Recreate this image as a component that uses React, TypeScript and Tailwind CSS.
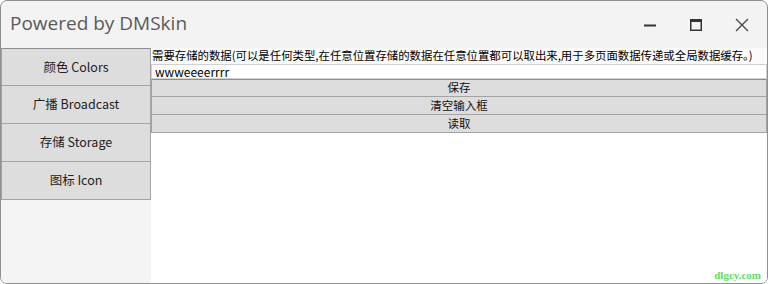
import React, { useState } from 'react';

const menu = ['颜色 Colors', '广播 Broadcast', '存储 Storage', '图标 Icon'];

const cjk = '"Noto Sans CJK SC", "Noto Sans", sans-serif';

const WinButton: React.FC<{ children: React.ReactNode }> = ({ children }) => (
  <div className="w-[46px] h-[46px] flex items-center justify-center text-[#333]">{children}</div>
);

export default function App() {
  const [value, setValue] = useState('wwweeeerrrr');

  return (
    <div className="relative w-[768px] h-[284px] overflow-hidden rounded-[7px] border border-[#8f8f8f] bg-[#f3f3f3] flex flex-col" style={{ fontFamily: cjk }}>
      <div className="h-[47px] shrink-0 flex items-center justify-between">
        <div className="pl-[9px] pb-[2px] text-[19px] text-[#5a5a5a]" style={{ fontFamily: '"Open Sans", "Noto Sans", sans-serif' }}>
          Powered by DMSkin
        </div>
        <div className="flex items-center pr-[2px]">
          <WinButton>
            <svg width="12" height="12" viewBox="0 0 12 12"><rect x="0" y="5.5" width="12" height="2" fill="#333" /></svg>
          </WinButton>
          <WinButton>
            <svg width="12" height="12" viewBox="0 0 12 12"><rect x="0.75" y="0.75" width="10.5" height="10.5" fill="none" stroke="#333" strokeWidth="1.5" /><rect x="0" y="0" width="12" height="3" fill="#333" /></svg>
          </WinButton>
          <WinButton>
            <svg width="14" height="14" viewBox="0 0 14 14"><path d="M1 1 L13 13 M13 1 L1 13" stroke="#444" strokeWidth="1.3" /></svg>
          </WinButton>
        </div>
      </div>
      <div className="flex flex-1 min-h-0">
        <div className="w-[150px] shrink-0 flex flex-col bg-[#f4f4f5]">
          {menu.map((m, i) => (
            <button key={i} className={`h-[38px] bg-[#dddddd] border border-[#a3a3a3] ${i > 0 ? 'border-t-0' : ''} border-t-[#8e8e8e] text-[12.5px] text-[#222]`}>
              {m}
            </button>
          ))}
        </div>
        <div className="flex-1 flex flex-col bg-white">
          <div className="h-[16px] flex items-center pl-[1px] text-[11.4px] text-black bg-[#fafafa] whitespace-nowrap">
            需要存储的数据(可以是任何类型,在任意位置存储的数据在任意位置都可以取出来,用于多页面数据传递或全局数据缓存。)
          </div>
          <input
            value={value}
            onChange={e => setValue(e.target.value)}
            className="h-[15px] border border-[#d0d0d0] px-[3px] text-[12px] text-black outline-none bg-white"
            style={{ fontFamily: cjk }}
          />
          {['保存', '清空输入框', '读取'].map((b, i) => (
            <button key={i} className={`h-[18px] bg-[#dddddd] border border-[#a3a3a3] ${i > 0 ? 'border-t-0' : ''} border-t-[#8e8e8e] text-[11.5px] leading-none text-[#111]`}>
              {b}
            </button>
          ))}
        </div>
      </div>
      <div className="absolute right-[6px] bottom-[2px] flex items-end gap-[1px]">
        <span className="text-[11px] font-bold text-[#5ee05e] leading-none" style={{ fontFamily: '"Liberation Serif", serif' }}>dlgcy.com</span>
      </div>
    </div>
  );
}
